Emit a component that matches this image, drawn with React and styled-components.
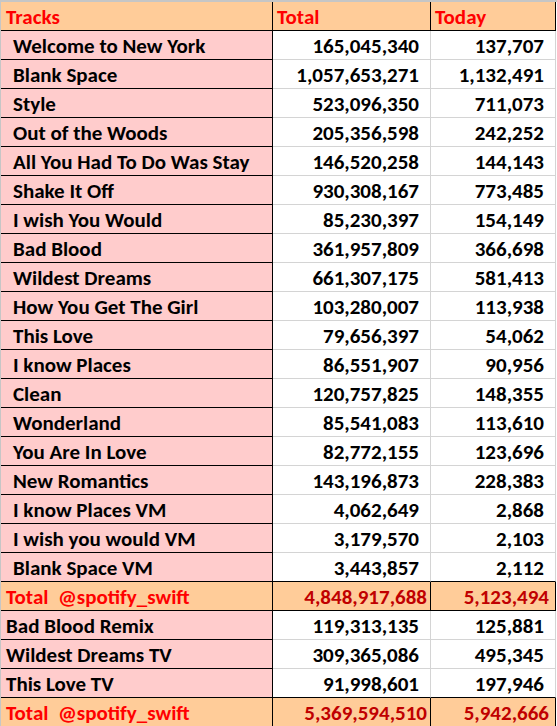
import React from 'react';
import styled, { createGlobalStyle } from 'styled-components';

const GlobalStyle = createGlobalStyle`
  html, body {
    margin: 0;
    padding: 0;
    background: #ffffff;
  }
  body {
    font-family: "Carlito", "Lato", "Liberation Sans", sans-serif;
  }
`;

const tracks = [
  ['Welcome to New York', '165,045,340', '137,707'],
  ['Blank Space', '1,057,653,271', '1,132,491'],
  ['Style', '523,096,350', '711,073'],
  ['Out of the Woods', '205,356,598', '242,252'],
  ['All You Had To Do Was Stay', '146,520,258', '144,143'],
  ['Shake It Off', '930,308,167', '773,485'],
  ['I wish You Would', '85,230,397', '154,149'],
  ['Bad Blood', '361,957,809', '366,698'],
  ['Wildest Dreams', '661,307,175', '581,413'],
  ['How You Get The Girl', '103,280,007', '113,938'],
  ['This Love', '79,656,397', '54,062'],
  ['I know Places', '86,551,907', '90,956'],
  ['Clean', '120,757,825', '148,355'],
  ['Wonderland', '85,541,083', '113,610'],
  ['You Are In Love', '82,772,155', '123,696'],
  ['New Romantics', '143,196,873', '228,383'],
  ['I know Places VM', '4,062,649', '2,868'],
  ['I wish you would VM', '3,179,570', '2,103'],
  ['Blank Space VM', '3,443,857', '2,112'],
];

const extras = [
  ['Bad Blood Remix', '119,313,135', '125,881'],
  ['Wildest Dreams TV', '309,365,086', '495,345'],
  ['This Love TV', '91,998,601', '197,946'],
];

// one list of rows, each with its kind: head, track, total, extra
const rows = [
  { kind: 'head', cells: ['Tracks', 'Total', 'Today'] },
  ...tracks.map((cells) => ({ kind: 'track', cells })),
  { kind: 'total', cells: ['Total  @spotify_swift', '4,848,917,688', '5,123,494'] },
  ...extras.map((cells) => ({ kind: 'extra', cells })),
  { kind: 'total', cells: ['Total  @spotify_swift', '5,369,594,510', '5,942,666'] },
];

const Sheet = styled.div`
  display: flex;
  flex-direction: column;
  width: 556px;
  border-top: 2px solid #c6c6c6;
  border-left: 1px solid #c6c6c6;
`;

const Row = styled.div`
  display: grid;
  grid-template-columns: 272px 158px 125px;
  height: 29px;
`;

const Cell = styled.div`
  box-sizing: border-box;
  display: flex;
  align-items: flex-end;
  justify-content: ${(p) => (p.$num ? 'flex-end' : 'flex-start')};
  padding: 0 ${(p) => p.$padRight}px 1px ${(p) => p.$padLeft}px;
  background: ${(p) => p.$bg};
  color: ${(p) => p.$color};
  border-right: 1px solid ${(p) => p.$side};
  border-bottom: 1px solid ${(p) => p.$under};
  font-size: 21px;
  font-weight: 700;
  line-height: 23px;
  white-space: pre;
  overflow: hidden;
`;

const PEACH = '#ffcc99';
const PINK = '#ffcccc';
const GRID = '#d4d4d4';
const INK = '#000000';

const cellLook = (kind, col, nextKind) => {
  const darkUnder = nextKind === 'total' || kind === 'total' || kind === 'head';
  if (kind === 'head') {
    return { $bg: PEACH, $color: '#ff0000', $side: INK, $under: INK, $padLeft: col === 0 ? 5 : 4, $padRight: 4 };
  }
  if (kind === 'total') {
    return {
      $bg: PEACH,
      $color: col === 0 ? '#ff0000' : '#c00000',
      $side: INK,
      $under: INK,
      $padLeft: 5,
      $padRight: col === 1 ? 3 : 6,
    };
  }
  if (col === 0) {
    return { $bg: PINK, $color: INK, $side: INK, $under: INK, $padLeft: kind === 'track' ? 12 : 5, $padRight: 4 };
  }
  return { $bg: '#ffffff', $color: INK, $side: GRID, $under: darkUnder ? INK : GRID, $padLeft: 4, $padRight: 11 };
};

const App = () => (
  <>
    <GlobalStyle />
    <Sheet>
      {rows.map((row, i) => {
        const nextKind = rows[i + 1] ? rows[i + 1].kind : null;
        return (
          <Row key={i}>
            {row.cells.map((text, col) => (
              <Cell key={col} $num={col > 0 && row.kind !== 'head'} {...cellLook(row.kind, col, nextKind)}>
                {text}
              </Cell>
            ))}
          </Row>
        );
      })}
    </Sheet>
  </>
);

export default App;
